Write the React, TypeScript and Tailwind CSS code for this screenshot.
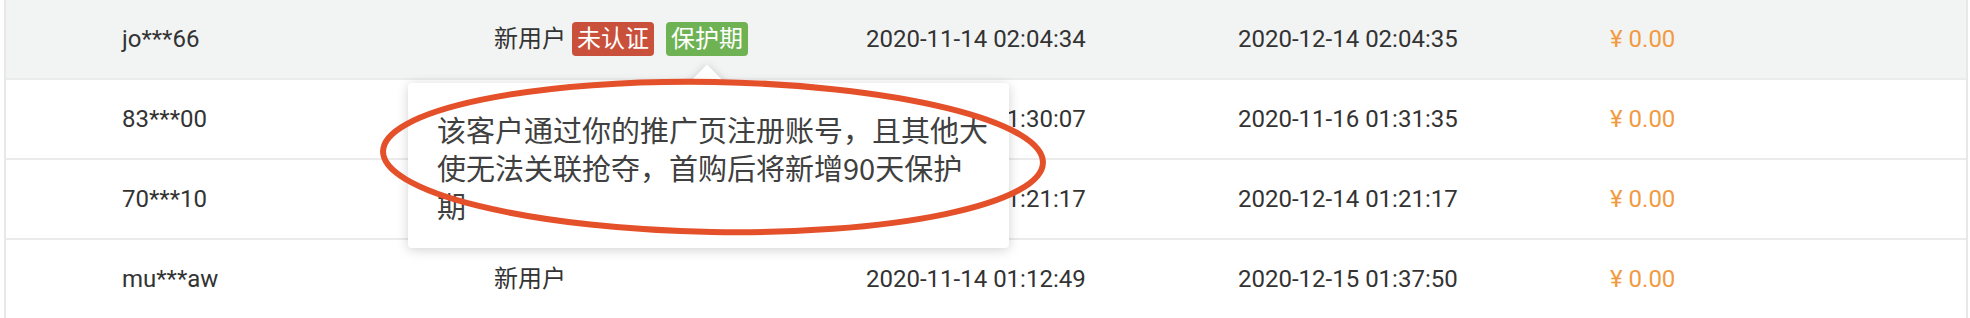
import React from 'react';

type Row = {
  user: string;
  tags: string[];
  created: string;
  expires: string;
  amount: string;
};

const rows: Row[] = [
  { user: 'jo***66', tags: ['未认证', '保护期'], created: '2020-11-14 02:04:34', expires: '2020-12-14 02:04:35', amount: '0.00' },
  { user: '83***00', tags: [], created: '2020-11-16 01:30:07', expires: '2020-11-16 01:31:35', amount: '0.00' },
  { user: '70***10', tags: [], created: '2020-11-14 01:21:17', expires: '2020-12-14 01:21:17', amount: '0.00' },
  { user: 'mu***aw', tags: [], created: '2020-11-14 01:12:49', expires: '2020-12-15 01:37:50', amount: '0.00' },
];

function Tag({ label }: { label: string }) {
  const color = label === '保护期' ? 'bg-[#6fb253]' : 'bg-[#c9503a]';
  return (
    <span className={`${color} text-white rounded-[4px] px-[5px] h-[34px] leading-[34px] text-[24px] inline-block`}>
      {label}
    </span>
  );
}

export default function App() {
  return (
    <div className="relative w-[1970px] h-[318px] overflow-hidden bg-white text-[#333] text-[24px] font-['Roboto','Noto_Sans_CJK_SC',sans-serif]">
      <div className="ml-[4px] w-[1964px] border-x-2 border-[#e8e8e8]">
        {rows.map((r, i) => (
          <div
            key={r.user}
            className={`grid grid-cols-[372px_372px_372px_372px_1fr] items-center h-[80px] border-b-2 border-[#ebebeb] ${
              i === 0 ? 'bg-[#f2f4f4]' : 'bg-white'
            }`}
          >
            <div className="pl-[116px]">{r.user}</div>
            <div className="pl-[116px] flex items-center">
              <span>新用户</span>
              {r.tags.length > 0 && (
                <div className="flex gap-[12px] ml-[6px]">
                  {r.tags.map((t) => (
                    <Tag key={t} label={t} />
                  ))}
                </div>
              )}
            </div>
            <div className="pl-[116px] whitespace-nowrap">{r.created}</div>
            <div className="pl-[116px] whitespace-nowrap">{r.expires}</div>
            <div className="pl-[116px] text-[#f29a3f] whitespace-nowrap">¥ {r.amount}</div>
          </div>
        ))}
      </div>

      {/* tooltip for 保护期 */}
      <div className="absolute left-[694px] top-[70px] w-[26px] h-[26px] rotate-45 bg-white shadow-[0_0_8px_rgba(0,0,0,0.15)]" />
      <div className="absolute left-[408px] top-[83px] w-[601px] h-[165px] bg-white rounded-[4px] shadow-[0_2px_12px_rgba(0,0,0,0.18)] pt-[27px] pl-[29px] text-[29px] leading-[38px] text-[#404040] font-['Noto_Sans_CJK_SC','Roboto',sans-serif]">
        <div className="whitespace-nowrap">该客户通过你的推广页注册账号，且其他大</div>
        <div className="whitespace-nowrap">使无法关联抢夺，首购后将新增90天保护</div>
        <div className="whitespace-nowrap">期</div>
      </div>

      {/* hand-drawn highlight */}
      <svg className="absolute left-0 top-0 pointer-events-none" width="1970" height="318" viewBox="0 0 1970 318">
        <ellipse cx="713" cy="157" rx="330" ry="75" fill="none" stroke="#e4502a" strokeWidth="6" transform="rotate(1 713 157)" />
      </svg>
    </div>
  );
}
